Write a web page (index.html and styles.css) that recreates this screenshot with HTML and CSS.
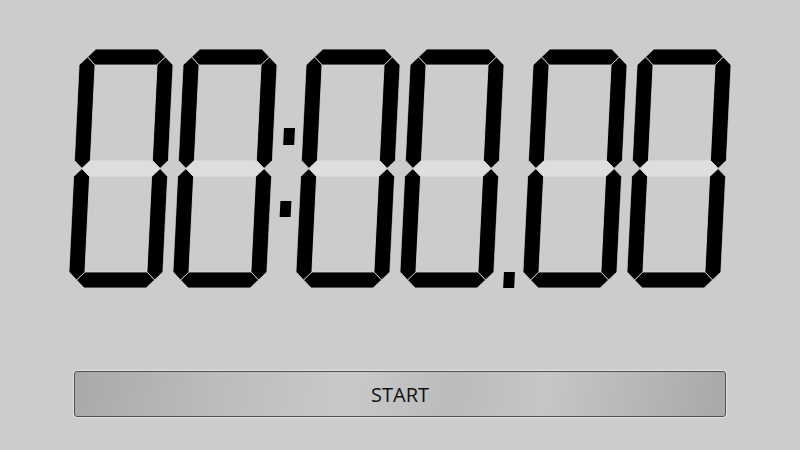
FILE: index.html
```html
<!DOCTYPE html>
<html>

<head>
  <title>Stopwatch</title>
  <link rel="stylesheet" href="styles.css">
</head>

<body>
  <div class="display">
    <div class="pair">
      <svg class="digit" viewBox="0 0 94 239">
        <polygon class="seg" points="16,0 78,0 86,8 78,16 16,16 8,8" />
        <polygon class="seg" points="94,16 86,8 78,16 78,111.5 86,119.5 94,111.5" />
        <polygon class="seg" points="94,127.5 86,119.5 78,127.5 78,223 86,231 94,223" />
        <polygon class="seg" points="16,223 78,223 86,231 78,239 16,239 8,231" />
        <polygon class="seg" points="0,127.5 8,119.5 16,127.5 16,223 8,231 0,223" />
        <polygon class="seg" points="0,16 8,8 16,16 16,111.5 8,119.5 0,111.5" />
        <polygon class="seg off" points="8,119.5 16,111.5 78,111.5 86,119.5 78,127.5 16,127.5" />
      </svg>
      <svg class="digit" viewBox="0 0 94 239">
        <polygon class="seg" points="16,0 78,0 86,8 78,16 16,16 8,8" />
        <polygon class="seg" points="94,16 86,8 78,16 78,111.5 86,119.5 94,111.5" />
        <polygon class="seg" points="94,127.5 86,119.5 78,127.5 78,223 86,231 94,223" />
        <polygon class="seg" points="16,223 78,223 86,231 78,239 16,239 8,231" />
        <polygon class="seg" points="0,127.5 8,119.5 16,127.5 16,223 8,231 0,223" />
        <polygon class="seg" points="0,16 8,8 16,16 16,111.5 8,119.5 0,111.5" />
        <polygon class="seg off" points="8,119.5 16,111.5 78,111.5 86,119.5 78,127.5 16,127.5" />
      </svg>
    </div>

    <div class="sep colon">
      <span class="dot upper"></span>
      <span class="dot lower"></span>
    </div>

    <div class="pair">
      <svg class="digit" viewBox="0 0 94 239">
        <polygon class="seg" points="16,0 78,0 86,8 78,16 16,16 8,8" />
        <polygon class="seg" points="94,16 86,8 78,16 78,111.5 86,119.5 94,111.5" />
        <polygon class="seg" points="94,127.5 86,119.5 78,127.5 78,223 86,231 94,223" />
        <polygon class="seg" points="16,223 78,223 86,231 78,239 16,239 8,231" />
        <polygon class="seg" points="0,127.5 8,119.5 16,127.5 16,223 8,231 0,223" />
        <polygon class="seg" points="0,16 8,8 16,16 16,111.5 8,119.5 0,111.5" />
        <polygon class="seg off" points="8,119.5 16,111.5 78,111.5 86,119.5 78,127.5 16,127.5" />
      </svg>
      <svg class="digit" viewBox="0 0 94 239">
        <polygon class="seg" points="16,0 78,0 86,8 78,16 16,16 8,8" />
        <polygon class="seg" points="94,16 86,8 78,16 78,111.5 86,119.5 94,111.5" />
        <polygon class="seg" points="94,127.5 86,119.5 78,127.5 78,223 86,231 94,223" />
        <polygon class="seg" points="16,223 78,223 86,231 78,239 16,239 8,231" />
        <polygon class="seg" points="0,127.5 8,119.5 16,127.5 16,223 8,231 0,223" />
        <polygon class="seg" points="0,16 8,8 16,16 16,111.5 8,119.5 0,111.5" />
        <polygon class="seg off" points="8,119.5 16,111.5 78,111.5 86,119.5 78,127.5 16,127.5" />
      </svg>
    </div>

    <div class="sep point">
      <span class="dot"></span>
    </div>

    <div class="pair">
      <svg class="digit" viewBox="0 0 94 239">
        <polygon class="seg" points="16,0 78,0 86,8 78,16 16,16 8,8" />
        <polygon class="seg" points="94,16 86,8 78,16 78,111.5 86,119.5 94,111.5" />
        <polygon class="seg" points="94,127.5 86,119.5 78,127.5 78,223 86,231 94,223" />
        <polygon class="seg" points="16,223 78,223 86,231 78,239 16,239 8,231" />
        <polygon class="seg" points="0,127.5 8,119.5 16,127.5 16,223 8,231 0,223" />
        <polygon class="seg" points="0,16 8,8 16,16 16,111.5 8,119.5 0,111.5" />
        <polygon class="seg off" points="8,119.5 16,111.5 78,111.5 86,119.5 78,127.5 16,127.5" />
      </svg>
      <svg class="digit" viewBox="0 0 94 239">
        <polygon class="seg" points="16,0 78,0 86,8 78,16 16,16 8,8" />
        <polygon class="seg" points="94,16 86,8 78,16 78,111.5 86,119.5 94,111.5" />
        <polygon class="seg" points="94,127.5 86,119.5 78,127.5 78,223 86,231 94,223" />
        <polygon class="seg" points="16,223 78,223 86,231 78,239 16,239 8,231" />
        <polygon class="seg" points="0,127.5 8,119.5 16,127.5 16,223 8,231 0,223" />
        <polygon class="seg" points="0,16 8,8 16,16 16,111.5 8,119.5 0,111.5" />
        <polygon class="seg off" points="8,119.5 16,111.5 78,111.5 86,119.5 78,127.5 16,127.5" />
      </svg>
    </div>
  </div>

  <button class="start" type="button">START</button>
</body>

</html>
```

FILE: styles.css
```css
html, body {
  margin: 0;
  height: 100%;
  background: #cccccc;
  overflow: hidden;
}

/* the whole readout leans a little, like an LCD face */
.display {
  display: flex;
  justify-content: center;
  height: 239px;
  margin-top: 49px;
  transform: skewX(-2.8deg);
  transform-origin: center;
}
.pair {
  display: flex;
  gap: 10px;
}
.digit {
  display: block;
  width: 94px;
  height: 239px;
}
.seg {
  fill: #000000;
  stroke: #dcdcdc;
  stroke-width: 0.8;
  stroke-linejoin: miter;
}
.seg.off {
  fill: #dedede;
  stroke: #d6d6d6;
}

.sep {
  width: 29px;
  display: flex;
  flex-direction: column;
  padding-left: 10px;
  box-sizing: border-box;
}
.dot {
  display: block;
  width: 11px;
  background: #000000;
}
.colon .upper {
  height: 17px;
  margin-top: 79px;
}
.colon .lower {
  height: 16px;
  margin-top: 56px;
}
.point .dot {
  height: 16px;
  margin-top: 223px;
}

.start {
  display: block;
  box-sizing: border-box;
  width: 652px;
  height: 46px;
  margin: 83px auto 0;
  padding: 0;
  border: 1px solid #555555;
  border-radius: 3px;
  background: linear-gradient(100deg, #a9a9a9 0%, #bcbcbc 22%, #c9c9c9 42%, #bbbbbb 58%, #c6c6c6 72%, #a8a8a8 100%);
  box-shadow: 0 0 1px 1px rgba(235, 235, 235, 0.6);
  font-family: "Open Sans", "Noto Sans", sans-serif;
  font-size: 20px;
  color: #111111;
  cursor: pointer;
}
```
